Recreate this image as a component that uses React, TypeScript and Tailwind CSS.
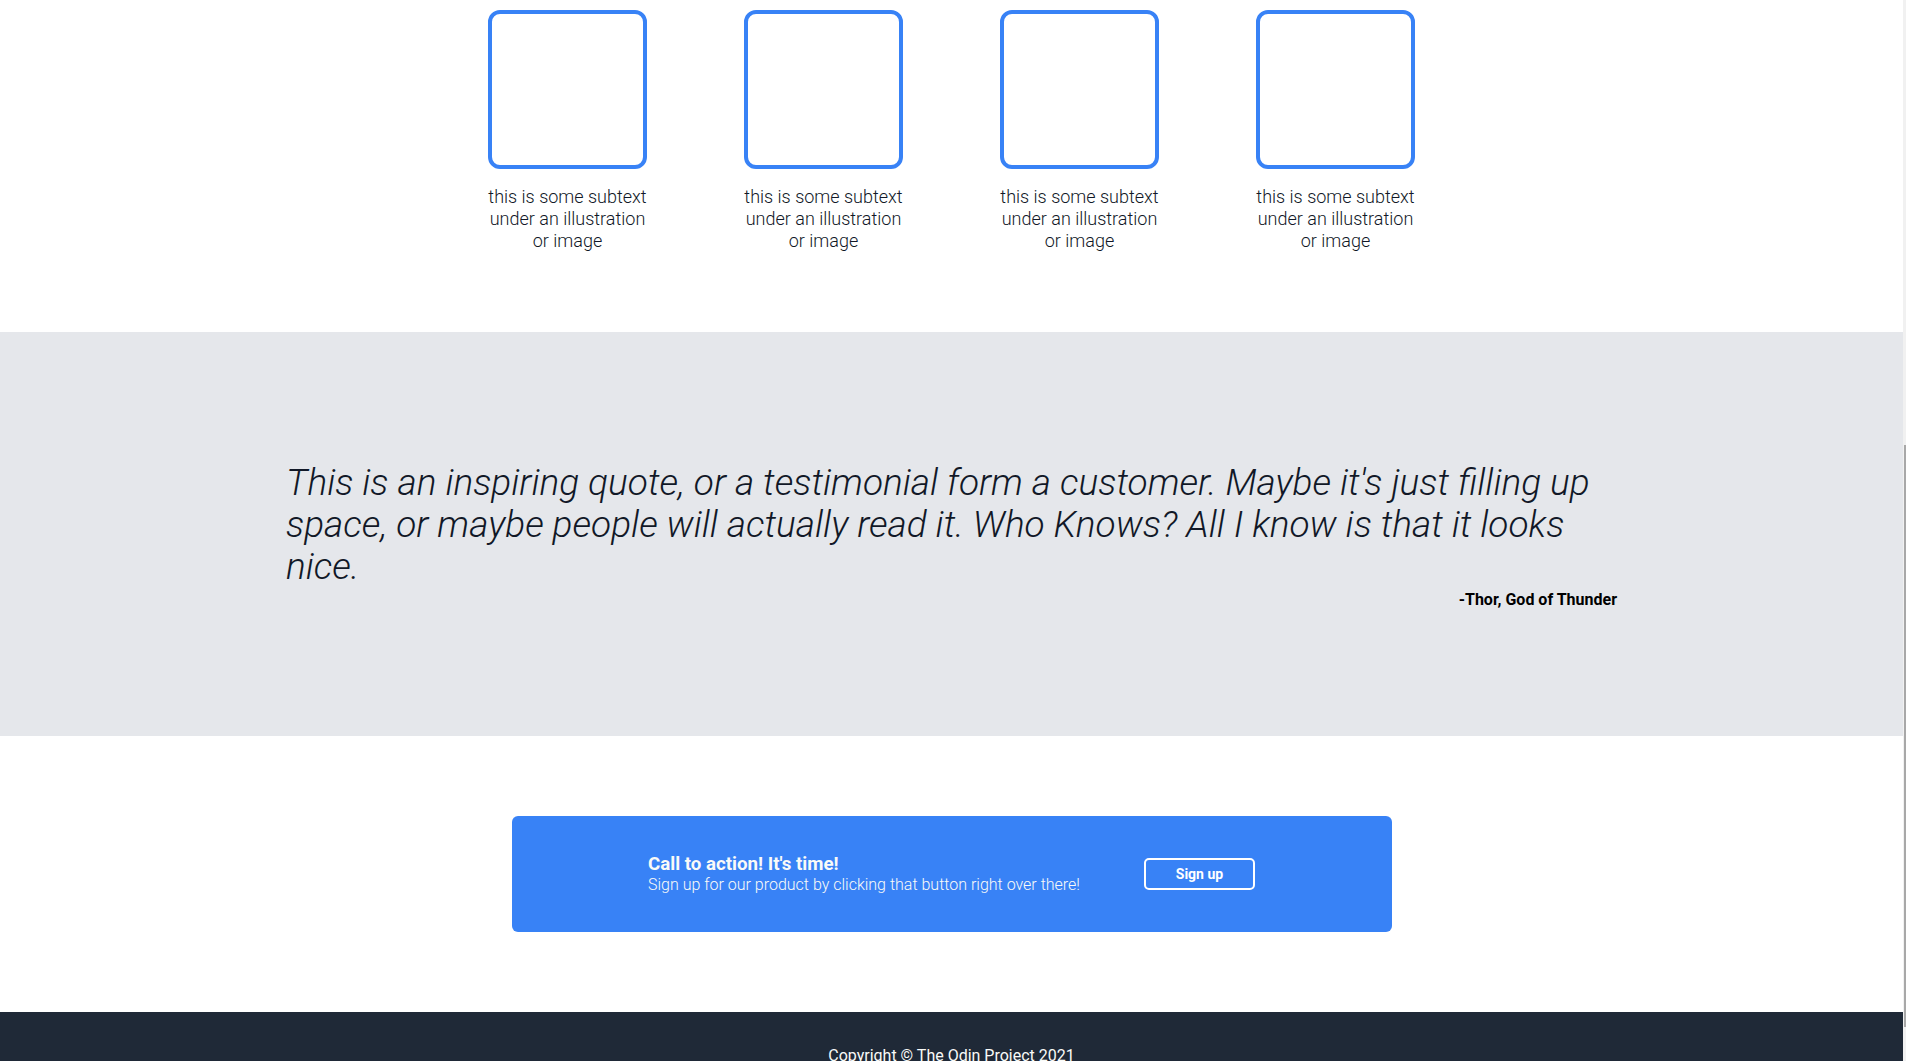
import React from "react";

const items = [1, 2, 3, 4];

export default function App() {
  return (
    <div className="flex w-full bg-white" style={{ fontFamily: "Roboto, 'Liberation Sans', sans-serif" }}>
      <div className="flex-1 min-w-0">
        <section className="pt-[10px] pb-[80px]">
          <div className="flex justify-center gap-[98px]">
            {items.map((i) => (
              <div key={i} className="flex w-[158px] flex-col items-center">
                <div className="h-[159px] w-[159px] shrink-0 rounded-[12px] border-4 border-[#3882f6]" />
                <p className="mt-[17px] w-[172px] shrink-0 text-center text-[18px] font-light leading-[22px] text-[#111827]">
                  this is some subtext under an illustration or image
                </p>
              </div>
            ))}
          </div>
        </section>

        <section className="bg-[#e5e7eb] pt-[130px] pb-[126px]">
          <div className="mx-auto w-[1331px]">
            <p className="text-[37px] font-light italic leading-[42px] text-[#111827]">
              This is an inspiring quote, or a testimonial form a customer. Maybe it's just filling up space, or maybe people will actually read it. Who Knows? All I know is that it looks nice.
            </p>
            <p className="mt-[1px] text-right text-[16px] font-bold leading-[21px] text-black">-Thor, God of Thunder</p>
          </div>
        </section>

        <section className="py-[80px]">
          <div className="mx-auto flex h-[116px] w-[880px] items-center justify-center gap-[64px] rounded-[6px] bg-[#3882f6] text-[#f9faf8]">
            <div>
              <p className="text-[18.7px] font-bold leading-[21px]">Call to action! It's time!</p>
              <p className="text-[16px] font-light leading-[19px]">
                Sign up for our product by clicking that button right over there!
              </p>
            </div>
            <button className="h-[32px] w-[111px] rounded-[5px] border-2 border-white text-[14px] font-bold text-white">
              Sign up
            </button>
          </div>
        </section>

        <footer className="bg-[#1f2937] pt-[33px] pb-[20px] text-center text-[16px] leading-[21px] text-[#f9faf8]">
          Copyright © The Odin Project 2021
        </footer>
      </div>
      <div className="relative w-[3px] shrink-0 bg-[#f1f1f1]">
        <div className="absolute left-[1px] top-[445px] h-[582px] w-[2px] bg-[#a8a8a8]" />
      </div>
    </div>
  );
}
